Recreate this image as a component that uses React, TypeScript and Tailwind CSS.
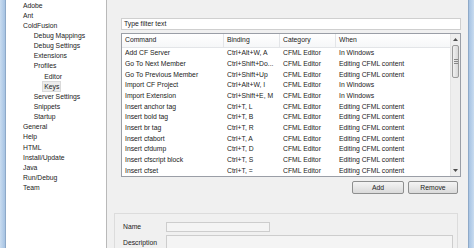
import React from "react";

const tree: { label: string; level: number; selected?: boolean }[] = [
  { label: "Adobe", level: 0 },
  { label: "Ant", level: 0 },
  { label: "ColdFusion", level: 0 },
  { label: "Debug Mappings", level: 1 },
  { label: "Debug Settings", level: 1 },
  { label: "Extensions", level: 1 },
  { label: "Profiles", level: 1 },
  { label: "Editor", level: 2 },
  { label: "Keys", level: 2, selected: true },
  { label: "Server Settings", level: 1 },
  { label: "Snippets", level: 1 },
  { label: "Startup", level: 1 },
  { label: "General", level: 0 },
  { label: "Help", level: 0 },
  { label: "HTML", level: 0 },
  { label: "Install/Update", level: 0 },
  { label: "Java", level: 0 },
  { label: "Run/Debug", level: 0 },
  { label: "Team", level: 0 },
];

const rows = [
  ["Add CF Server", "Ctrl+Alt+W, A", "In Windows"],
  ["Go To Next Member", "Ctrl+Shift+Do...", "Editing CFML content"],
  ["Go To Previous Member", "Ctrl+Shift+Up", "Editing CFML content"],
  ["Import CF Project", "Ctrl+Alt+W, I", "In Windows"],
  ["Import Extension", "Ctrl+Shift+E, M", "In Windows"],
  ["Insert anchor tag", "Ctrl+T, L", "Editing CFML content"],
  ["Insert bold tag", "Ctrl+T, B", "Editing CFML content"],
  ["Insert br tag", "Ctrl+T, R", "Editing CFML content"],
  ["Insert cfabort", "Ctrl+T, A", "Editing CFML content"],
  ["Insert cfdump", "Ctrl+T, D", "Editing CFML content"],
  ["Insert cfscript block", "Ctrl+T, S", "Editing CFML content"],
  ["Insert cfset", "Ctrl+T, =", "Editing CFML content"],
];

const indent = ["pl-[16px]", "pl-[26.7px]", "pl-[37.3px]"];

function Button({ label, width }: { label: string; width: string }) {
  return (
    <div
      className={`${width} h-[13px] flex items-center justify-center rounded-[2px] border border-[#8e8f8f] bg-gradient-to-b from-[#f4f4f4] to-[#dadada] text-[#222]`}
    >
      {label}
    </div>
  );
}

export default function App() {
  return (
    <div
      className="w-[474px] h-[248px] flex overflow-hidden text-[6.8px] text-[#222] bg-[#f0f0f0]"
      style={{ fontFamily: '"Liberation Sans", Arial, sans-serif' }}
    >
      {/* window frame left */}
      <div className="w-[6px] h-full bg-gradient-to-r from-[#c9dcf0] to-[#a6c3e3] border-r border-[#8ea9c8]" />

      {/* preference tree */}
      <div className="w-[101px] h-full bg-white border-r border-[#b9b9b9] pt-0">
        {tree.map((t) => (
          <div key={t.label} className={`h-[10.15px] flex items-center ${indent[t.level]}`}>
            <span
              className={`leading-[9px] px-[1px] ${
                t.selected ? "bg-[#ededed] outline outline-[#dadada]" : ""
              }`}
            >
              {t.label}
            </span>
          </div>
        ))}
      </div>

      {/* preference page */}
      <div className="flex-1 h-full flex flex-col pt-[18px] pl-[14px] pr-[7px]">
        <div className="h-[12px] bg-white border border-[#cfcfcf] flex items-center pl-[2px]">
          Type filter text
        </div>

        <div className="mt-[3px] h-[148px] bg-white border border-[#9a9ea6] flex">
          <div className="flex-1 flex flex-col">
            <div className="h-[14px] flex bg-gradient-to-b from-white to-[#f6f7f8] border-b border-[#e3e5e8]">
              <div className="w-[102px] pl-[3px] flex items-center border-r border-[#e3e5e8]">Command</div>
              <div className="w-[56px] pl-[3px] flex items-center border-r border-[#e3e5e8]">Binding</div>
              <div className="w-[56px] pl-[3px] flex items-center border-r border-[#e3e5e8]">Category</div>
              <div className="flex-1 pl-[3px] flex items-center">When</div>
            </div>
            {rows.map((r) => (
              <div key={r[0]} className="h-[10.7px] flex items-center">
                <div className="w-[102px] pl-[3px] whitespace-nowrap">{r[0]}</div>
                <div className="w-[56px] pl-[3px] whitespace-nowrap">{r[1]}</div>
                <div className="w-[56px] pl-[3px] whitespace-nowrap">CFML Editor</div>
                <div className="flex-1 pl-[3px] whitespace-nowrap">{r[2]}</div>
              </div>
            ))}
          </div>
          {/* scrollbar */}
          <div className="w-[10px] h-full flex flex-col bg-[#eeeeee] border-l border-[#e4e4e4]">
            <div className="h-[11px] flex items-center justify-center text-[#555]">
              <svg width="5" height="3" viewBox="0 0 5 3">
                <path d="M0 3 L2.5 0 L5 3 Z" fill="#4d4d4d" />
              </svg>
            </div>
            <div className="mx-[1px] h-[33px] rounded-[2px] border border-[#9a9a9a] bg-gradient-to-r from-[#f1f1f1] to-[#d8d8d8] flex flex-col items-center justify-center gap-[1px]">
              <div className="w-[4px] h-px bg-[#888]" />
              <div className="w-[4px] h-px bg-[#888]" />
              <div className="w-[4px] h-px bg-[#888]" />
            </div>
            <div className="flex-1" />
            <div className="h-[11px] flex items-center justify-center">
              <svg width="5" height="3" viewBox="0 0 5 3">
                <path d="M0 0 L5 0 L2.5 3 Z" fill="#4d4d4d" />
              </svg>
            </div>
          </div>
        </div>

        <div className="mt-[4px] flex justify-end gap-[4px] pr-[3px]">
          <Button label="Add" width="w-[52px]" />
          <Button label="Remove" width="w-[50px]" />
        </div>

        <div className="mt-[19px] -ml-[7px] mr-[3px] flex-1 border-t border-x border-[#dcdcdc] pl-[8px] pt-[8px]">
          <div className="flex items-center h-[10px]">
            <div className="w-[43px]">Name</div>
            <div className="w-[104px] h-[10px] bg-[#f4f4f4] border border-[#cdcdcd]" />
          </div>
          <div className="flex items-start mt-[3px]">
            <div className="w-[43px] pt-[3px]">Description</div>
            <div className="flex-1 mr-[4px] h-[20px] bg-[#f4f4f4] border border-[#cdcdcd]" />
          </div>
        </div>
      </div>

      {/* window frame right */}
      <div className="w-[6px] h-full bg-gradient-to-r from-[#a6c3e3] to-[#c9dcf0] border-l border-[#8ea9c8]" />
    </div>
  );
}
